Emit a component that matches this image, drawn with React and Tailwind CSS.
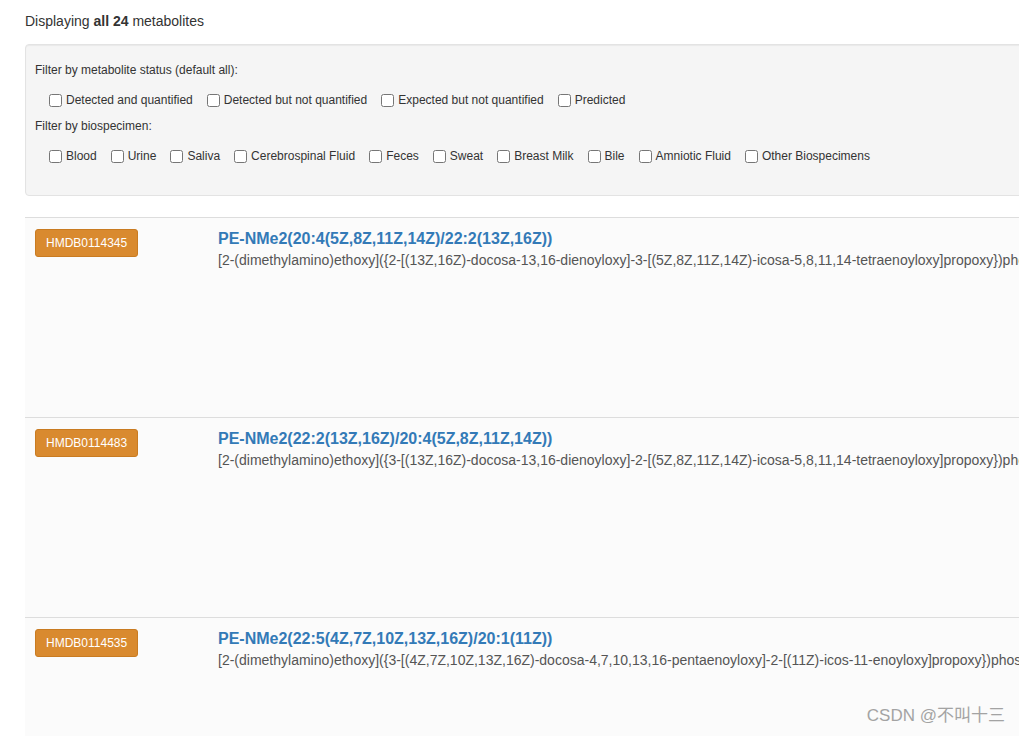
import React from 'react';

const statuses = ['Detected and quantified', 'Detected but not quantified', 'Expected but not quantified', 'Predicted'];
const biospecimens = ['Blood', 'Urine', 'Saliva', 'Cerebrospinal Fluid', 'Feces', 'Sweat', 'Breast Milk', 'Bile', 'Amniotic Fluid', 'Other Biospecimens'];

const metabolites = [
  {
    id: 'HMDB0114345',
    name: 'PE-NMe2(20:4(5Z,8Z,11Z,14Z)/22:2(13Z,16Z))',
    iupac: '[2-(dimethylamino)ethoxy]({2-[(13Z,16Z)-docosa-13,16-dienoyloxy]-3-[(5Z,8Z,11Z,14Z)-icosa-5,8,11,14-tetraenoyloxy]propoxy})phosphinic acid',
  },
  {
    id: 'HMDB0114483',
    name: 'PE-NMe2(22:2(13Z,16Z)/20:4(5Z,8Z,11Z,14Z))',
    iupac: '[2-(dimethylamino)ethoxy]({3-[(13Z,16Z)-docosa-13,16-dienoyloxy]-2-[(5Z,8Z,11Z,14Z)-icosa-5,8,11,14-tetraenoyloxy]propoxy})phosphinic acid',
  },
  {
    id: 'HMDB0114535',
    name: 'PE-NMe2(22:5(4Z,7Z,10Z,13Z,16Z)/20:1(11Z))',
    iupac: '[2-(dimethylamino)ethoxy]({3-[(4Z,7Z,10Z,13Z,16Z)-docosa-4,7,10,13,16-pentaenoyloxy]-2-[(11Z)-icos-11-enoyloxy]propoxy})phosphinic acid',
  },
];

function CheckRow({ items }) {
  return (
    <div className="flex items-center gap-[14px] pl-[14px] h-[17px] whitespace-nowrap">
      {items.map((label) => (
        <label key={label} className="flex items-center gap-[4px]">
          <input type="checkbox" className="w-[13px] h-[13px] m-0" />
          <span>{label}</span>
        </label>
      ))}
    </div>
  );
}

function MetaboliteRow({ item }) {
  return (
    <div className="flex border-t border-[#dddddd] bg-[#fbfbfb] h-[200px] px-[10px] pt-[11px]">
      <div className="w-[183px] shrink-0">
        <span className="inline-block h-[28px] leading-[26px] px-[10px] rounded-[3px] border border-[#c97b21] bg-[#d98a2f] text-white text-[12px]">
          {item.id}
        </span>
      </div>
      <div className="whitespace-nowrap">
        <div className="text-[16px] font-bold leading-[20px] text-[#337ab7]">{item.name}</div>
        <div className="text-[14px] leading-[20px] text-[#555555] mt-[1px]">{item.iupac}</div>
      </div>
    </div>
  );
}

export default function App() {
  return (
    <div
      className="relative h-[736px] w-full overflow-hidden bg-white text-[#333333]"
      style={{ fontFamily: '"Liberation Sans", Arial, "Noto Sans CJK SC", sans-serif' }}
    >
      <div className="w-[1300px] pl-[25px] pt-[11px]">
        <p className="text-[14px] leading-[20px]">
          Displaying <b>all 24</b> metabolites
        </p>

        <div className="mt-[13px] h-[152px] rounded-[4px] border border-[#e3e3e3] bg-[#f5f5f5] px-[9px] pt-[17px] text-[12px] leading-[17px] shadow-[inset_0_1px_1px_rgba(0,0,0,0.05)]">
          <p>Filter by metabolite status (default all):</p>
          <div className="mt-[13px]">
            <CheckRow items={statuses} />
          </div>
          <p className="mt-[9px]">Filter by biospecimen:</p>
          <div className="mt-[13px]">
            <CheckRow items={biospecimens} />
          </div>
        </div>

        <div className="mt-[21px]">
          {metabolites.map((m) => (
            <MetaboliteRow key={m.id} item={m} />
          ))}
        </div>
      </div>

      <div className="absolute right-[14px] bottom-[8px] text-[17px] text-[#9a9a9a] opacity-90">
        CSDN @不叫十三
      </div>
    </div>
  );
}
